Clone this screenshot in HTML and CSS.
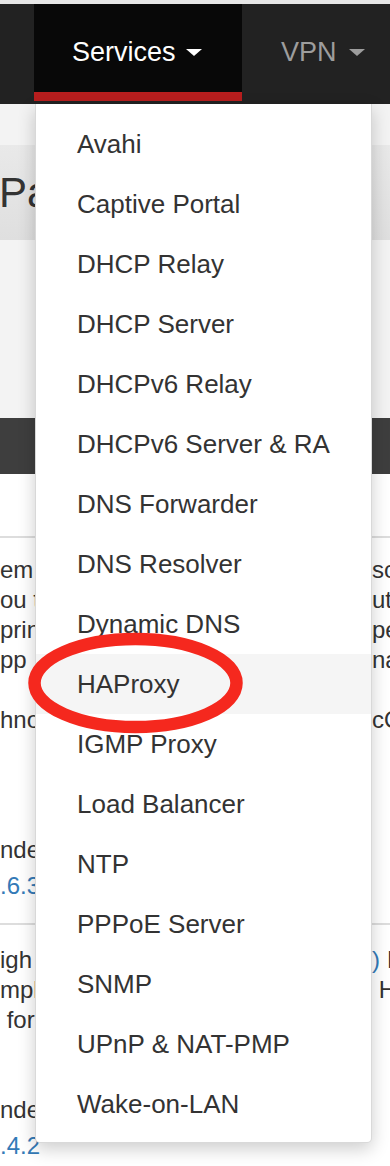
FILE: index.html
```html
<!DOCTYPE html>
<html>
<head>
<meta charset="utf-8">
<title>Services menu</title>
<link rel="stylesheet" href="styles.css">
</head>
<body>
<div class="topstrip"></div>
<nav class="navbar">
  <div class="nav-spacer"></div>
  <div class="nav-item active"><span>Services</span><span class="caret"></span></div>
  <div class="nav-item"><span>VPN</span><span class="caret"></span></div>
</nav>
<main class="page">
  <div class="title-bar"><h1>Package Manager</h1></div>
  <div class="tab-area"></div>
  <div class="panel-head"></div>
  <div class="table">
    <div class="table-head"></div>
    <div class="row row1">
      <div class="cell left">
        <div class="lines">em v
ou t
prin
pp

hno</div>
        <div class="lines dep">nde</div>
        <div class="lines ver"><a>.6.3</a></div>
      </div>
      <div class="cell right">
        <div class="lines">script
utilit
perf
nat

cOS</div>
      </div>
    </div>
    <div class="row row2">
      <div class="cell left">
        <div class="lines">igh
mpl
 for</div>
        <div class="lines dep2">nde</div>
        <div class="lines ver"><a>.4.2</a></div>
      </div>
      <div class="cell right">
        <div class="lines"><a>)</a> I
 Hi</div>
      </div>
    </div>
  </div>
</main>
<ul class="dropdown-menu">
  <li>Avahi</li>
  <li>Captive Portal</li>
  <li>DHCP Relay</li>
  <li>DHCP Server</li>
  <li>DHCPv6 Relay</li>
  <li>DHCPv6 Server &amp; RA</li>
  <li>DNS Forwarder</li>
  <li>DNS Resolver</li>
  <li>Dynamic DNS</li>
  <li class="active">HAProxy</li>
  <li>IGMP Proxy</li>
  <li>Load Balancer</li>
  <li>NTP</li>
  <li>PPPoE Server</li>
  <li>SNMP</li>
  <li>UPnP &amp; NAT-PMP</li>
  <li>Wake-on-LAN</li>
</ul>
<svg class="annot" width="390" height="1166" viewBox="0 0 390 1166" aria-hidden="true">
  <ellipse cx="135.5" cy="683" rx="101" ry="44" fill="none" stroke="#f5281e" stroke-width="12.5"/>
</svg>
</body>
</html>
```
FILE: styles.css
```css
html, body {
  margin: 0;
  padding: 0;
}
body {
  width: 390px;
  height: 1166px;
  overflow: hidden;
  position: relative;
  background: #fff;
  font-family: "Liberation Sans", Arial, "Helvetica Neue", sans-serif;
}
.topstrip {
  height: 4px;
  background: #e7e7e7;
}
.navbar {
  display: flex;
  height: 100px;
  background: #222;
}
.nav-spacer {
  width: 34px;
}
.nav-item {
  display: flex;
  align-items: center;
  gap: 12px;
  height: 97px;
  box-sizing: border-box;
  padding-left: 39px;
  font-size: 27px;
  color: #9d9d9d;
}
.nav-item.active {
  width: 208px;
  padding-left: 38px;
  padding-top: 9px;
  gap: 10px;
  background: #080808;
  color: #fff;
  border-bottom: 9px solid #b71e1e;
}
.caret {
  width: 0;
  height: 0;
  border-left: 8px solid transparent;
  border-right: 8px solid transparent;
  border-top: 7px solid currentColor;
}
.page {
  padding-top: 41px;
  background: #f3f3f3;
}
.title-bar {
  height: 95px;
  display: flex;
  align-items: center;
  background: linear-gradient(#e9e9e9, #dfdfdf);
}
.title-bar h1 {
  margin: 0 0 0 -1px;
  font-size: 42px;
  font-weight: normal;
  color: #333;
  white-space: nowrap;
}
.tab-area {
  height: 178px;
}
.panel-head {
  height: 56px;
  background: #3e3e3e;
}
.table {
  background: #fff;
}
.table-head {
  height: 62px;
  border-bottom: 2px solid #ddd;
}
.row {
  display: grid;
  grid-template-columns: 372px 1fr;
  box-sizing: border-box;
  font-size: 24px;
  line-height: 30px;
  color: #333;
}
.row1 {
  height: 387px;
  padding-top: 17px;
  border-bottom: 2px solid #ddd;
}
.row2 {
  padding-top: 20px;
}
.cell {
  overflow: hidden;
  white-space: nowrap;
}
.lines {
  white-space: pre;
}
.dep {
  margin-top: 100px;
}
.dep2 {
  margin-top: 60px;
}
.ver {
  margin-top: 6px;
}
.lines a {
  color: #337ab7;
}
.dropdown-menu {
  position: absolute;
  top: 104px;
  left: 35px;
  width: 337px;
  box-sizing: border-box;
  margin: 0;
  padding: 10px 0 8px;
  list-style: none;
  background: #fff;
  border: 1px solid rgba(0, 0, 0, 0.15);
  border-top: 0;
  border-radius: 0 0 5px 5px;
  box-shadow: 0 6px 18px rgba(0, 0, 0, 0.2);
}
.dropdown-menu li {
  height: 60px;
  line-height: 60px;
  padding-left: 41px;
  font-size: 26px;
  color: #333;
  white-space: nowrap;
}
.dropdown-menu li.active {
  background: #f5f5f5;
}
.annot {
  position: absolute;
  left: 0;
  top: 0;
  pointer-events: none;
}
```
